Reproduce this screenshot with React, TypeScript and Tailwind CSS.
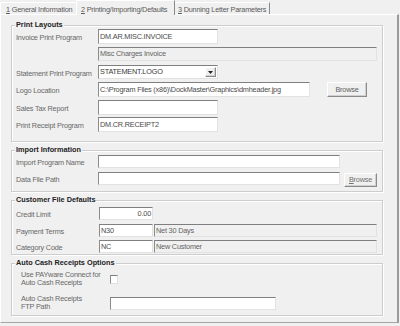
import React from "react";

const sunken =
  "border border-t-[#7f7f7f] border-l-[#8c8c8c] border-r-[#e2e2e2] border-b-[#e2e2e2]";
const raised =
  "border border-t-white border-l-white border-r-[#8a8a8a] border-b-[#8a8a8a] shadow-[inset_-1px_-1px_0_#d0d0d0]";

function Field({
  cls,
  value = "",
  ro = false,
  right = false,
}: {
  cls: string;
  value?: string;
  ro?: boolean;
  right?: boolean;
}) {
  return (
    <div
      className={`${cls} ${sunken} ${
        ro ? "bg-[#f0f0f0] text-[#646464]" : "bg-white text-[#4a4a4a]"
      } flex items-center ${
        right ? "justify-end pr-[1px]" : "pl-[1px]"
      } shrink-0 overflow-hidden whitespace-nowrap leading-none`}
    >
      {value}
    </div>
  );
}

function Label({
  children,
  cls = "w-[82px] pt-[3px]",
}: {
  children: React.ReactNode;
  cls?: string;
}) {
  return (
    <div
      className={`${cls} shrink-0 self-stretch flex items-center text-[#686868] leading-none whitespace-nowrap`}
    >
      {children}
    </div>
  );
}

function Group({
  title,
  cls,
  inner,
  children,
}: {
  title: string;
  cls: string;
  inner: string;
  children: React.ReactNode;
}) {
  return (
    <div
      className={`w-[372px] border border-[#cdcdcd] shadow-[inset_1px_1px_0_#ffffff,1px_1px_0_#ffffff] ${cls}`}
    >
      <div className="h-[10px] -mt-[6px] ml-[3px] px-[1px] w-fit bg-[#f0f0f0] font-bold text-[#222222] leading-[10px] tracking-[0px]">
        {title}
      </div>
      <div className={inner}>{children}</div>
    </div>
  );
}

export default function App() {
  return (
    <div className="w-[400px] h-[326px] bg-[#f0f0f0] overflow-hidden font-['Liberation_Sans',Arial,sans-serif] text-[7.3px] tracking-[-0.2px] select-none">
      {/* Tabs */}
      <div className="flex items-end h-[14px]">
        <div className="w-[76px] h-[12px] border-t border-l border-t-white border-l-white flex items-center pl-[5px] pt-[3px] text-[#5a5a5a] leading-none whitespace-nowrap">
          <u>1</u>&nbsp;General Information
        </div>
        <div className="relative z-10 w-[99px] h-[15px] -mb-[1px] bg-[#f0f0f0] border-t border-l border-r border-t-white border-l-white border-r-[#8a8a8a] flex items-center pl-[4px] pt-[4px] text-[#5a5a5a] leading-none whitespace-nowrap">
          <u>2</u>&nbsp;Printing/Importing/Defaults
        </div>
        <div className="w-[95px] h-[12px] border-t border-r border-t-white border-r-[#8a8a8a] flex items-center pl-[3px] pt-[3px] text-[#5a5a5a] leading-none whitespace-nowrap">
          <u>3</u>&nbsp;Dunning Letter Parameters
        </div>
      </div>

      {/* Panel */}
      <div className="w-[399px] h-[309px] border-t border-l border-r-2 border-b border-t-white border-l-white border-r-[#9a9a9a] border-b-[#a6a6a6] pl-[10px] pt-[10px] flex flex-col">
        {/* Print Layouts */}
        <Group title="Print Layouts" cls="pb-[9px]" inner="pl-[4px]">
          <div className="flex items-center h-[15px] -mt-[1px]">
            <Label>Invoice Print Program</Label>
            <Field cls="w-[120px] h-[15px]" value="DM.AR.MISC.INVOICE" />
          </div>
          <div className="flex items-center h-[14px] mt-[3px] pl-[82px]">
            <Field cls="w-[279px] h-[14px]" value="Misc Charges Invoice" ro />
          </div>
          <div className="flex items-center h-[14px] mt-[4px]">
            <Label>Statement Print Program</Label>
            <div
              className={`w-[120px] h-[14px] ${sunken} bg-white flex items-center justify-between pl-[1px] pr-[1px] text-[#3a3a3a] leading-none whitespace-nowrap`}
            >
              <span>STATEMENT.LOGO</span>
              <div
                className={`w-[11px] h-[10px] ${raised} bg-[#f0f0f0] flex items-center justify-center`}
              >
                <svg width="5" height="3" viewBox="0 0 5 3">
                  <path d="M0 0H5L2.5 3Z" fill="#222" />
                </svg>
              </div>
            </div>
          </div>
          <div className="flex items-center h-[15px] mt-[3px]">
            <Label>Logo Location</Label>
            <Field
              cls="w-[212px] h-[15px]"
              value="C:\Program Files (x86)\DockMaster\Graphics\dmheader.jpg"
            />
            <div
              className={`ml-[17px] w-[40px] h-[15px] ${raised} bg-[#f0f0f0] flex items-center justify-center text-[#5f5f5f] leading-none`}
            >
              Browse
            </div>
          </div>
          <div className="flex items-center h-[15px] mt-[3px]">
            <Label>Sales Tax Report</Label>
            <Field cls="w-[120px] h-[15px]" />
          </div>
          <div className="flex items-center h-[15px] mt-[2px]">
            <Label>Print Receipt Program</Label>
            <Field cls="w-[120px] h-[15px]" value="DM.CR.RECEIPT2" />
          </div>
        </Group>

        {/* Import Information */}
        <Group title="Import Information" cls="mt-[8px] pb-[4px]" inner="pl-[4px]">
          <div className="flex items-center h-[13px]">
            <Label>Import Program Name</Label>
            <Field cls="w-[242px] h-[13px]" />
          </div>
          <div className="flex items-start h-[15px] mt-[4px]">
            <Label cls="w-[82px] h-[13px] pt-[2px]">Data File Path</Label>
            <Field cls="w-[242px] h-[13px]" />
            <div
              className={`ml-[4px] mt-[1px] w-[33px] h-[14px] ${raised} bg-[#f0f0f0] flex items-center justify-center text-[#707070] leading-none`}
            >
              <span>
                <u>B</u>rowse
              </span>
            </div>
          </div>
        </Group>

        {/* Customer File Defaults */}
        <Group title="Customer File Defaults" cls="mt-[8px] pb-[1px]" inner="pl-[4px]">
          <div className="flex items-center h-[13px] mt-[2px]">
            <Label>Credit Limit</Label>
            <Field cls="ml-[1px] w-[54px] h-[13px]" value="0.00" right />
          </div>
          <div className="flex items-center h-[13px] mt-[4px]">
            <Label>Payment Terms</Label>
            <Field cls="ml-[1px] w-[54px] h-[13px]" value="N30" />
            <Field cls="ml-[1px] w-[223px] h-[13px]" value="Net 30 Days" ro />
          </div>
          <div className="flex items-center h-[13px] mt-[3px]">
            <Label>Category Code</Label>
            <Field cls="ml-[1px] w-[54px] h-[13px]" value="NC" />
            <Field cls="ml-[1px] w-[223px] h-[13px]" value="New Customer" ro />
          </div>
        </Group>

        {/* Auto Cash Receipts Options */}
        <Group title="Auto Cash Receipts Options" cls="mt-[8px] pb-[4px]" inner="pl-[9px]">
          <div className="flex items-center h-[16px] mt-[3px]">
            <div className="w-[89px] shrink-0 leading-[8px] text-[#686868]">
              <div>Use PAYware Connect for</div>
              <div>Auto Cash Receipts</div>
            </div>
            <div className={`w-[8px] h-[9px] ${sunken} bg-white`} />
          </div>
          <div className="flex items-center h-[16px] mt-[8px]">
            <div className="w-[89px] shrink-0 leading-[8px] text-[#686868]">
              <div>Auto Cash Receipts</div>
              <div>FTP Path</div>
            </div>
            <Field cls="w-[166px] h-[13px]" />
          </div>
        </Group>
      </div>
    </div>
  );
}
